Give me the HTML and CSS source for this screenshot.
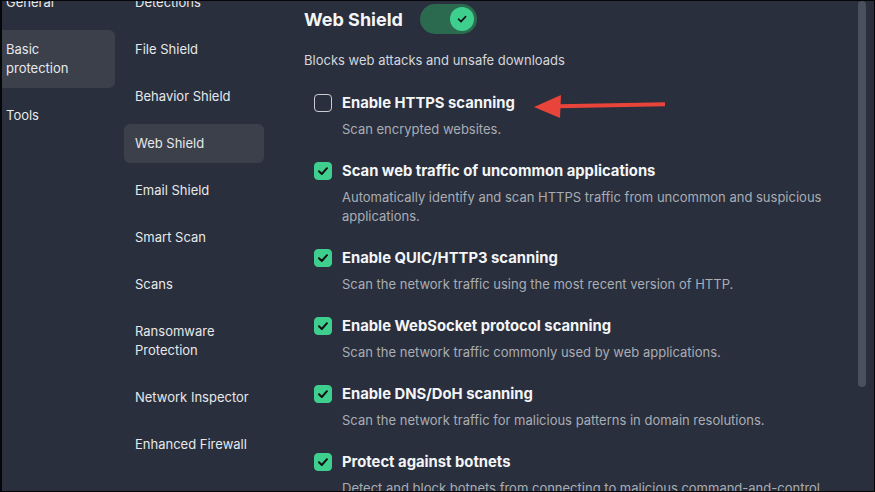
FILE: index.html
```html
<!DOCTYPE html>
<html lang="en">
<head>
<meta charset="utf-8">
<title>Web Shield</title>
<link rel="stylesheet" href="styles.css">
</head>
<body>
<div class="app">
  <nav class="nav nav-primary">
    <div class="nav-item">General</div>
    <div class="nav-item active">Basic<br>protection</div>
    <div class="nav-item">Tools</div>
  </nav>
  <nav class="nav nav-secondary">
    <div class="nav-item">Detections</div>
    <div class="nav-item">File Shield</div>
    <div class="nav-item">Behavior Shield</div>
    <div class="nav-item active">Web Shield</div>
    <div class="nav-item">Email Shield</div>
    <div class="nav-item">Smart Scan</div>
    <div class="nav-item">Scans</div>
    <div class="nav-item">Ransomware<br>Protection</div>
    <div class="nav-item">Network Inspector</div>
    <div class="nav-item">Enhanced Firewall</div>
  </nav>
  <main class="content">
    <header class="head">
      <h1 class="title">Web Shield</h1>
      <div class="toggle">
        <span class="knob">
          <svg width="12" height="12" viewBox="0 0 12 12"><path d="M2.5 6.2 L5 8.6 L9.6 3.6" fill="none" stroke="#111" stroke-width="1.6" stroke-linecap="round" stroke-linejoin="round"/></svg>
        </span>
      </div>
    </header>
    <p class="lead">Blocks web attacks and unsafe downloads</p>
    <div class="options">
      <div class="option">
        <span class="box"></span>
        <div class="label">Enable HTTPS scanning</div>
        <div class="desc">Scan encrypted websites.</div>
      </div>
      <div class="option">
        <span class="box checked"><svg width="14" height="14" viewBox="0 0 14 14"><path d="M3 7.2 L5.8 10 L11 4.2" fill="none" stroke="#111" stroke-width="2" stroke-linecap="round" stroke-linejoin="round"/></svg></span>
        <div class="label">Scan web traffic of uncommon applications</div>
        <div class="desc">Automatically identify and scan HTTPS traffic from uncommon and suspicious applications.</div>
      </div>
      <div class="option">
        <span class="box checked"><svg width="14" height="14" viewBox="0 0 14 14"><path d="M3 7.2 L5.8 10 L11 4.2" fill="none" stroke="#111" stroke-width="2" stroke-linecap="round" stroke-linejoin="round"/></svg></span>
        <div class="label">Enable QUIC/HTTP3 scanning</div>
        <div class="desc">Scan the network traffic using the most recent version of HTTP.</div>
      </div>
      <div class="option">
        <span class="box checked"><svg width="14" height="14" viewBox="0 0 14 14"><path d="M3 7.2 L5.8 10 L11 4.2" fill="none" stroke="#111" stroke-width="2" stroke-linecap="round" stroke-linejoin="round"/></svg></span>
        <div class="label">Enable WebSocket protocol scanning</div>
        <div class="desc">Scan the network traffic commonly used by web applications.</div>
      </div>
      <div class="option">
        <span class="box checked"><svg width="14" height="14" viewBox="0 0 14 14"><path d="M3 7.2 L5.8 10 L11 4.2" fill="none" stroke="#111" stroke-width="2" stroke-linecap="round" stroke-linejoin="round"/></svg></span>
        <div class="label">Enable DNS/DoH scanning</div>
        <div class="desc">Scan the network traffic for malicious patterns in domain resolutions.</div>
      </div>
      <div class="option">
        <span class="box checked"><svg width="14" height="14" viewBox="0 0 14 14"><path d="M3 7.2 L5.8 10 L11 4.2" fill="none" stroke="#111" stroke-width="2" stroke-linecap="round" stroke-linejoin="round"/></svg></span>
        <div class="label">Protect against botnets</div>
        <div class="desc">Detect and block botnets from connecting to malicious command-and-control servers.</div>
      </div>
    </div>
  </main>
  <div class="scrollbar"><div class="thumb"></div></div>
  <svg class="arrow" width="140" height="32" viewBox="0 0 140 32">
    <path d="M28 16.2 L135 14.2" stroke="#e8443a" stroke-width="4" fill="none"/>
    <path d="M4 17 L31 5 L30 28 Z" fill="#e8443a"/>
  </svg>
</div>
</body>
</html>
```

FILE: styles.css
```css
* { box-sizing: border-box; }
html, body { margin: 0; padding: 0; background: #000; }
body {
  font-family: Inter, Roboto, "Noto Sans", "Liberation Sans", sans-serif;
  color: #e8eaed;
}
.app {
  position: relative;
  width: 875px;
  height: 492px;
  display: flex;
  overflow: hidden;
  background: #292f3c;
  border-left: 2px solid #050608;
  border-top: 1px solid #050608;
  border-bottom: 1px solid #050608;
  border-right: 1px solid #050608;
}
.nav {
  display: flex;
  flex-direction: column;
  gap: 8px;
  margin-top: -18px;
  flex: none;
}
.nav-item {
  font-size: 13px;
  line-height: 19px;
  padding: 10px 4px;
  border-radius: 6px;
  color: #e6e8eb;
}
.nav-item.active { background: #3b404b; }
.nav-primary { width: 113px; }
.nav-primary .nav-item { border-top-left-radius: 0; border-bottom-left-radius: 0; }
.nav-secondary { width: 140px; margin-left: 9px; }
.nav-secondary .nav-item { padding-left: 11px; }
.content {
  flex: 1;
  margin-left: 40px;
  padding-top: 3px;
  padding-right: 18px;
  min-width: 0;
}
.head {
  display: flex;
  align-items: center;
  gap: 17px;
  height: 30px;
}
.title {
  margin: 0;
  font-size: 18px;
  font-weight: 700;
  color: #f4f5f7;
}
.toggle {
  width: 57px;
  height: 30px;
  border-radius: 15px;
  background: #2c6a50;
  display: flex;
  align-items: center;
  justify-content: flex-end;
  padding-right: 3px;
}
.knob {
  width: 24px;
  height: 24px;
  border-radius: 50%;
  background: #3ecf8e;
  display: flex;
  align-items: center;
  justify-content: center;
}
.lead {
  margin: 17px 0 0;
  font-size: 13px;
  line-height: 18px;
  color: #d4d7dc;
}
.options {
  margin-top: 24px;
  display: flex;
  flex-direction: column;
  gap: 22px;
}
.option {
  display: grid;
  grid-template-columns: 18px 1fr;
  column-gap: 10px;
  margin-left: 10px;
}
.box {
  grid-row: 1;
  grid-column: 1;
  width: 18px;
  height: 18px;
  margin-top: 1px;
  border-radius: 4px;
  border: 1.5px solid #c9ccd2;
  display: flex;
  align-items: center;
  justify-content: center;
}
.box.checked { background: #3ecf8e; border-color: #3ecf8e; }
.label {
  grid-column: 2;
  font-size: 14.8px;
  font-weight: 700;
  line-height: 20px;
  color: #f4f5f7;
}
.desc {
  grid-column: 2;
  margin-top: 7px;
  font-size: 13px;
  line-height: 19px;
  color: #a9adb5;
}
.scrollbar {
  flex: none;
  width: 8px;
  margin-right: 8px;
}
.thumb {
  height: 386px;
  border-radius: 4px;
  background: #4a505c;
}
.arrow {
  position: absolute;
  left: 528px;
  top: 89px;
}
```
